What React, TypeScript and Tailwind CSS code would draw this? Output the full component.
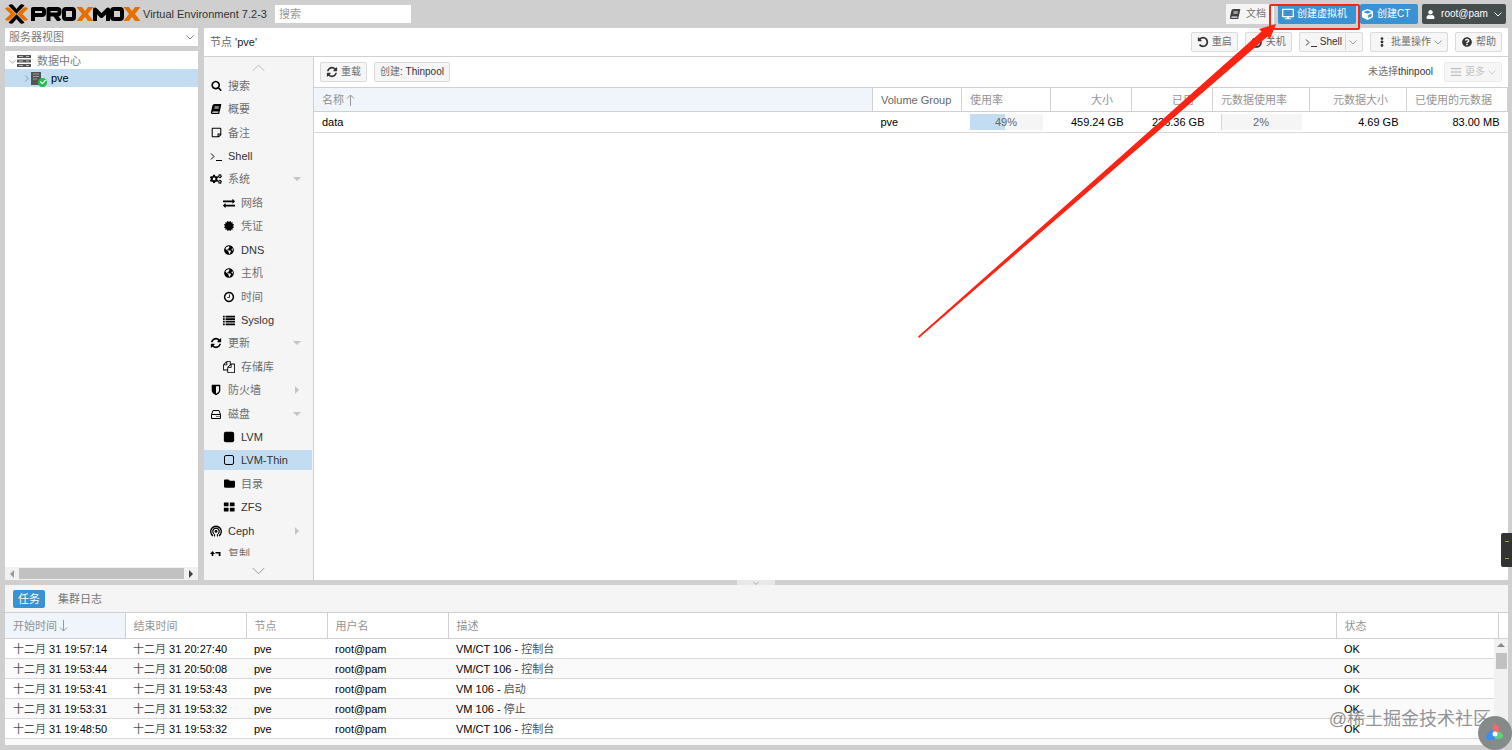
import type { ReactNode } from "react";
import {
  FaBook,
  FaCertificate,
  FaCheck,
  FaCogs,
  FaCube,
  FaDesktop,
  FaEllipsisV,
  FaFolder,
  FaGlobeAmericas,
  FaPowerOff,
  FaQuestionCircle,
  FaRegStickyNote,
  FaUser,
} from "react-icons/fa";

const paths = {
  search:
    "M1216 832q0-185-131.5-316.5t-316.5-131.5-316.5 131.5-131.5 316.5 131.5 316.5 316.5 131.5 316.5-131.5 131.5-316.5zm512 832q0 52-38 90t-90 38q-54 0-90-38l-343-342q-179 124-399 124-143 0-273.5-55.5t-225-150-150-225-55.5-273.5 55.5-273.5 150-225 225-150 273.5-55.5 273.5 55.5 225 150 150 225 55.5 273.5q0 220-124 399l343 343q37 37 37 90z",
  refresh:
    "M1639 1056q0 5-1 7-64 268-268 434.5t-478 166.5q-146 0-282.5-55t-243.5-157l-129 129q-19 19-45 19t-45-19-19-45v-448q0-26 19-45t45-19h448q26 0 45 19t19 45-19 45l-137 137q71 66 161 102t187 36q134 0 250-65t186-179q11-17 53-117 8-23 30-23h192q13 0 22.5 9.5t9.5 22.5zm25-800v448q0 26-19 45t-45 19h-448q-26 0-45-19t-19-45 19-45l138-138q-148-137-349-137-134 0-250 65t-186 179q-11 17-53 117-8 23-30 23h-199q-13 0-22.5-9.5t-9.5-22.5v-7q65-268 270-434.5t480-166.5q146 0 284 55.5t245 156.5l130-129q19-19 45-19t45 19 19 45z",
  undo: "M1664 896q0 156-61 298t-164 245-245 164-298 61q-172 0-327-72.5t-264-204.5q-7-10-6.5-22.5t8.5-20.5l137-138q10-9 25-9 16 2 23 12 73 95 179 147t225 52q104 0 198.5-40.5t163.5-109.5 109.5-163.5 40.5-198.5-40.5-198.5-109.5-163.5-163.5-109.5-198.5-40.5q-98 0-188 35.5t-160 101.5l137 138q31 30 14 69-17 40-59 40h-448q-26 0-45-19t-19-45v-448q0-42 40-59 39-17 69 14l130 129q107-101 244.5-156.5t284.5-55.5q156 0 298 61t245 164 164 245 61 298z",
  clock:
    "M1024 544v448q0 14-9 23t-23 9h-320q-14 0-23-9t-9-23v-64q0-14 9-23t23-9h224v-352q0-14 9-23t23-9h64q14 0 23 9t9 23zm416 352q0-148-73-273t-198-198-273-73-273 73-198 198-73 273 73 273 198 198 273 73 273-73 198-198 73-273zm224 0q0 209-103 385.5t-279.5 279.5-385.5 103-385.5-103-279.5-279.5-103-385.5 103-385.5 279.5-279.5 385.5-103 385.5 103 279.5 279.5 103 385.5z",
  files:
    "M1696 384q40 0 68 28t28 68v1216q0 40-28 68t-68 28h-960q-40 0-68-28t-28-68v-288h-544q-40 0-68-28t-28-68v-672q0-40 20-88t48-76l408-408q28-28 76-48t88-20h416q40 0 68 28t28 68v328q68-40 128-40h416zm-544 213l-299 299h299v-299zm-640-384l-299 299h299v-299zm196 647l316-316v-416h-384v416q0 40-28 68t-68 28h-416v640h512v-256q0-40 20-88t48-76zm956 804v-1152h-384v416q0 40-28 68t-68 28h-416v640h896z",
  exchange:
    "M1792 1184v192q0 13-9.500 22.500t-22.500 9.500h-1376v192q0 13-9.500 22.500t-22.500 9.500q-12 0-24-10l-319-320q-9-9-9-22 0-14 9-23l320-320q9-9 23-9 13 0 22.500 9.500t9.500 22.500v192h1376q13 0 22.500 9.500t9.500 22.500zm0-544q0 14-9 23l-320 320q-9 9-23 9-13 0-22.500-9.500t-9.500-22.500v-192h-1376q-13 0-22.500-9.500t-9.500-22.500v-192q0-13 9.500-22.500t22.500-9.500h1376v-192q0-14 9-23t23-9q12 0 24 10l319 319q9 9 9 23z",
  list: "M0 256h256v256H0zM384 256h1408v256H384zM0 640h256v256H0zM384 640h1408v256H384zM0 1024h256v256H0zM384 1024h1408v256H384zM0 1408h256v256H0zM384 1408h1408v256H384z",
  bars: "M128 320h1536v176H128zM128 808h1536v176H128zM128 1296h1536v176H128z",
  shield:
    "M1344 960v-640h-448v1137q119-63 213-137 235-184 235-360zm192-768v768q0 86-33.500 170.500t-83 150-118 127.500-126.500 103-121 77.500-89.500 49.500-42.500 20q-12 6-26 6t-26-6q-16-7-42.500-20t-89.500-49.500-121-77.500-126.500-103-118-127.500-83-150-33.500-170.500v-768q0-26 19-45t45-19h1152q26 0 45 19t19 45z",
  thLarge:
    "M192 224h576q64 0 64 64v448q0 64-64 64H192q-64 0-64-64V288q0-64 64-64zM1088 224h576q64 0 64 64v448q0 64-64 64h-576q-64 0-64-64V288q0-64 64-64zM192 992h576q64 0 64 64v448q0 64-64 64H192q-64 0-64-64v-448q0-64 64-64zM1088 992h576q64 0 64 64v448q0 64-64 64h-576q-64 0-64-64v-448q0-64 64-64z",
  square:
    "M416 128h960q288 0 288 288v960q0 288-288 288H416q-288 0-288-288V416q0-288 288-288z",
};

function Glyph({ name, size = 12 }: { name: keyof typeof paths; size?: number }) {
  return (
    <svg width={size} height={size} viewBox="0 0 1792 1792" fill="currentColor" aria-hidden="true">
      <path d={paths[name]} />
    </svg>
  );
}

function Prompt() {
  return (
    <svg width="12" height="12" viewBox="0 0 12 12" fill="none" stroke="currentColor" aria-hidden="true">
      <path d="M1 3.500l3 3-3 3M6 10.500h6" />
    </svg>
  );
}

function SquareOutline() {
  return (
    <svg width="12" height="12" viewBox="0 0 12 12" fill="none" stroke="currentColor" aria-hidden="true">
      <rect x="1.500" y="1.500" width="9" height="9" rx="1.500" />
    </svg>
  );
}

function DiskIcon() {
  return (
    <svg width="12" height="12" viewBox="0 0 12 12" fill="none" stroke="currentColor" strokeLinejoin="round" aria-hidden="true">
      <path d="M1.500 6.500h9v4h-9zM1.500 6.500l1.500-4h6l1.500 4M6.500 8.500h1M8.500 8.500h1" />
    </svg>
  );
}

function CephIcon() {
  return (
    <svg width="12" height="12" viewBox="0 0 12 12" fill="none" stroke="currentColor" aria-hidden="true">
      <path d="M3 10.900a5.300 5.300 0 1 1 6 0" strokeWidth="1.300" />
      <path d="M4 8.800a3.200 3.200 0 1 1 4 0" strokeWidth="1.200" />
      <circle cx="6" cy="6.300" r="1" fill="currentColor" />
      <path d="M4.600 11.500V9M7.400 11.500V9" />
    </svg>
  );
}

function ReplicaIcon() {
  return (
    <svg width="12" height="12" viewBox="0 0 12 12" fill="currentColor" aria-hidden="true">
      <path d="M2.500 3l2.500 3H3.300v4h3.200v1.500H1.700V6H0zM5.500 4h5v5H12l-2.500 3L7 9h1.700V5.500H5.500z" />
    </svg>
  );
}

function Chevron({ dir = "down", size = 8 }: { dir?: "down" | "up" | "right"; size?: number }) {
  const d = { down: "M1 5l7 7 7-7", up: "M1 12l7-7 7 7", right: "M5 1l7 7-7 7" }[dir];
  return (
    <svg width={size} height={size} viewBox="0 0 16 16" fill="none" stroke="currentColor" strokeWidth={16 / size} aria-hidden="true">
      <path d={d} />
    </svg>
  );
}

function Triangle({ dir }: { dir: "down" | "up" | "left" | "right" }) {
  const d = { down: "M0 2h8L4 6z", up: "M0 6h8L4 2z", left: "M6 0v8L2 4z", right: "M2 0v8l4-4z" }[dir];
  return (
    <svg width="8" height="8" viewBox="0 0 8 8" fill="currentColor" aria-hidden="true">
      <path d={d} />
    </svg>
  );
}

function SortArrow({ up = false }: { up?: boolean }) {
  return (
    <svg width="9" height="12" viewBox="0 0 9 12" fill="none" stroke="#999" className="ml-0.5 inline-block align-[-2px]" aria-hidden="true">
      <path d={up ? "M4.500 12V1M1 4.500l3.500-3.500L8 4.500" : "M4.500 0v11M1 7.500L4.500 11 8 7.500"} />
    </svg>
  );
}

// Chinese runs are set in a lighter tone than latin ones
function Label({ text }: { text: string }) {
  return (
    <>
      {text.split(/([\u4e00-\u9fff]+)/).map((part, i) =>
        i % 2 ? (
          <span key={i} className="opacity-70">
            {part}
          </span>
        ) : (
          part
        )
      )}
    </>
  );
}

interface ToolButtonProps {
  icon?: ReactNode;
  label: string;
  menu?: boolean;
  split?: boolean;
  disabled?: boolean;
}

function ToolButton({ icon, label, menu, split, disabled }: ToolButtonProps) {
  return (
    <button
      type="button"
      disabled={disabled}
      className="flex h-5 items-center gap-[3px] whitespace-nowrap rounded-xs border border-[#dadada] bg-[#f6f6f6] px-[5px] text-[10px] text-[#333] disabled:border-[#ececec] disabled:text-[#b0b0b0]"
    >
      {icon && <span className="flex w-3 justify-center">{icon}</span>}
      <span>
        <Label text={label} />
      </span>
      {split && <span className="h-4 w-px bg-[#d8d8d8]" />}
      {(menu || split) && (
        <span className={disabled ? "text-[#ccc]" : "text-[#999]"}>
          <Chevron />
        </span>
      )}
    </button>
  );
}

interface NavItem {
  label: string;
  icon: ReactNode;
  child?: boolean;
  arrow?: "down" | "right";
  active?: boolean;
}

const navItems: NavItem[] = [
  { label: "搜索", icon: <Glyph name="search" size={11} /> },
  { label: "概要", icon: <FaBook size={10} className="-skew-x-12" /> },
  { label: "备注", icon: <FaRegStickyNote size={11} /> },
  { label: "Shell", icon: <Prompt /> },
  { label: "系统", icon: <FaCogs size={12} />, arrow: "down" },
  { label: "网络", icon: <Glyph name="exchange" />, child: true },
  { label: "凭证", icon: <FaCertificate size={10} />, child: true },
  { label: "DNS", icon: <FaGlobeAmericas size={10} />, child: true },
  { label: "主机", icon: <FaGlobeAmericas size={10} />, child: true },
  { label: "时间", icon: <Glyph name="clock" />, child: true },
  { label: "Syslog", icon: <Glyph name="list" />, child: true },
  { label: "更新", icon: <Glyph name="refresh" />, arrow: "down" },
  { label: "存储库", icon: <Glyph name="files" />, child: true },
  { label: "防火墙", icon: <Glyph name="shield" />, arrow: "right" },
  { label: "磁盘", icon: <DiskIcon />, arrow: "down" },
  { label: "LVM", icon: <Glyph name="square" />, child: true },
  { label: "LVM-Thin", icon: <SquareOutline />, child: true, active: true },
  { label: "目录", icon: <FaFolder size={11} />, child: true },
  { label: "ZFS", icon: <Glyph name="thLarge" />, child: true },
  { label: "Ceph", icon: <CephIcon />, arrow: "right" },
  { label: "复制", icon: <ReplicaIcon /> },
];

const tasks = [
  ["十二月 31 19:57:14", "十二月 31 20:27:40", "pve", "root@pam", "VM/CT 106 - 控制台", "OK"],
  ["十二月 31 19:53:44", "十二月 31 20:50:08", "pve", "root@pam", "VM/CT 106 - 控制台", "OK"],
  ["十二月 31 19:53:41", "十二月 31 19:53:43", "pve", "root@pam", "VM 106 - 启动", "OK"],
  ["十二月 31 19:53:31", "十二月 31 19:53:32", "pve", "root@pam", "VM 106 - 停止", "OK"],
  ["十二月 31 19:48:50", "十二月 31 19:53:32", "pve", "root@pam", "VM/CT 106 - 控制台", "OK"],
];

function Logo() {
  return (
    <div className="flex items-center gap-[3px]" role="img" aria-label="Proxmox">
      <svg width="23" height="20" viewBox="0 0 23 20" fill="none" aria-hidden="true">
        <path d="M0 4.500q2.500-2.500 5.500 0L11 10l-5.500 5.500q-3 2.500-5.500 0L5.500 10zM23 4.500q-2.500-2.500-5.500 0L12 10l5.500 5.500q3 2.500 5.500 0L17.500 10z" fill="#e57000" />
        <path d="M3.500 1.500q3-2.500 5 0l3 3.500 3-3.500q2-2.500 5 0L11.500 9.700zM3.500 18.500q3 2.500 5 0l3-3.500 3 3.500q2 2.500 5 0l-8-8.200z" fill="#000" />
      </svg>
      <svg width="109" height="14" viewBox="0 0 109 14" fill="none" stroke="#000" strokeWidth="4" strokeLinejoin="round" aria-hidden="true">
        <path d="M2 14V2h9q2 0 2 2v2q0 2-2 2H2M17.500 14V2h9q2 0 2 2v1.500q0 2-2 2h-9M24 8l4.500 6M35 2h6q2 0 2 2v6q0 2-2 2h-6q-2 0-2-2V4q0-2 2-2z" />
        <path d="M64 14V2.500l6.500 6.500L77 2.500V14M83 2h6q2 0 2 2v6q0 2-2 2h-6q-2 0-2-2V4q0-2 2-2z" />
        <path d="M45.500 0h5.500l3 4 3-4h5.500L57 7l5.500 7H57l-3-4-3 4h-5.500L51 7zM92.500 0H98l3 4 3-4h5.500L104 7l5.500 7H104l-3-4-3 4h-5.500L98 7z" fill="#e57000" stroke="none" />
      </svg>
    </div>
  );
}

function Header() {
  return (
    <header className="flex h-7 shrink-0 items-center pl-[5px] pr-1.5 text-[10px]">
      <Logo />
      <h1 className="ml-[3px] whitespace-nowrap text-[11px] text-[#333]">Virtual Environment 7.2-3</h1>
      <input
        type="search"
        aria-label="搜索"
        placeholder="搜索"
        className="ml-2 h-[18px] w-[136px] bg-white px-1 text-[11px] outline-none placeholder:text-[#999]"
      />
      <div className="ml-auto flex items-center gap-1">
        <button type="button" className="flex h-5 w-12 items-center gap-1.5 bg-[#f5f5f5] px-1 text-[#404040]">
          <FaBook size={10} className="-skew-x-12" />
          <Label text="文档" />
        </button>
        <button type="button" className="flex h-5 w-[78px] items-center gap-[3px] rounded-xs bg-[#3892d4] px-1 text-white">
          <FaDesktop size={12} />
          创建虚拟机
        </button>
        <button type="button" className="flex h-5 w-[58px] items-center gap-1 rounded-xs bg-[#3892d4] px-0.5 text-white">
          <FaCube size={11} />
          创建CT
        </button>
        <button type="button" className="flex h-5 w-[84px] items-center justify-center gap-1.5 rounded-xs bg-[#464d4d] text-white">
          <FaUser size={9} />
          root@pam
          <Chevron />
        </button>
      </div>
    </header>
  );
}

function ResourceTree() {
  return (
    <aside className="flex w-[193px] shrink-0 flex-col gap-[5px]">
      <button type="button" className="flex h-[18px] items-center justify-between bg-white px-1 text-[#404040]">
        <Label text="服务器视图" />
        <span className="text-[#888]">
          <Chevron />
        </span>
      </button>
      <div className="flex min-h-0 flex-1 flex-col bg-white">
        <div className="flex h-[18px] items-center pl-1 pt-0.5 text-[#404040]">
          <span className="w-2 text-[#aaa]">
            <Chevron size={7} />
          </span>
          <svg width="14" height="12" viewBox="0 0 14 12" className="mr-1.5" aria-hidden="true">
            <path d="M0 0h14v3H0zM0 4.500h14v3H0zM0 9h14v3H0z" fill="#555" />
            <path d="M9 1.500h3M9 6h3M9 10.500h3M2 1.500h4M2 6h4M2 10.500h4" stroke="#bbb" />
          </svg>
          <Label text="数据中心" />
        </div>
        <div className="flex h-[18px] items-center bg-[#c2ddf2] pl-[18px] text-black">
          <span className="w-2 text-[#999]">
            <Chevron size={7} dir="right" />
          </span>
          <span className="relative mr-1 w-4">
            <svg width="10" height="13" viewBox="0 0 10 13" aria-hidden="true">
              <path d="M0 0h10v13H0z" fill="#555" />
              <path d="M2 2h6M2 4.500h6M2 7h4" stroke="#999" />
            </svg>
            <span className="absolute -bottom-0.5 right-0 flex size-[9px] items-center justify-center rounded-full bg-[#21bf4b] text-white">
              <FaCheck size={6} />
            </span>
          </span>
          pve
        </div>
        <div className="mt-auto flex h-[13px] items-center justify-between bg-[#f1f1f1] px-[3px]">
          <span className="text-[#999]">
            <Triangle dir="left" />
          </span>
          <span className="mx-[3px] h-[11px] flex-1 bg-[#c1c1c1]" />
          <span className="text-[#404040]">
            <Triangle dir="right" />
          </span>
        </div>
      </div>
    </aside>
  );
}

function NodeNav() {
  return (
    <nav className="flex w-[110px] shrink-0 flex-col border-r border-[#d0d0d0] bg-[#f5f5f5]">
      <div className="flex h-[17px] shrink-0 items-center justify-center pt-1 text-[#bbb]">
        <Chevron dir="up" size={13} />
      </div>
      <div className="min-h-0 flex-1 overflow-hidden">
        <ul className="flex h-[492px] flex-col">
          {navItems.map((item) => (
            <li key={item.label} className="flex flex-1 items-center">
              <a
                href="#"
                className={`mr-px flex h-5 flex-1 items-center pr-[11px] text-[#333] ${item.child ? "pl-[19px]" : "pl-1.5"} ${item.active ? "bg-[#c2ddf2]" : ""}`}
              >
                <span className="mr-1.5 flex w-3 justify-center text-black">{item.icon}</span>
                <Label text={item.label} />
                {item.arrow && (
                  <span className="ml-auto text-[#c4c4c4]">
                    <Triangle dir={item.arrow} />
                  </span>
                )}
              </a>
            </li>
          ))}
        </ul>
      </div>
      <div className="flex h-6 shrink-0 items-center justify-center pt-1 text-[#999]">
        <Chevron size={13} />
      </div>
    </nav>
  );
}

function UsageBar({ percent }: { percent: number }) {
  return (
    <div className="relative h-4 bg-[#f5f5f5] text-center leading-4 text-[#666]">
      <div className="absolute inset-y-0 left-0 bg-[#c2ddf2]" style={{ width: `${percent}%` }} />
      <span className="relative">{percent}%</span>
    </div>
  );
}

function ThinpoolTable() {
  const th = "border-r border-[#d0d0d0] px-2 font-normal";
  return (
    <table className="w-full table-fixed border-collapse">
      <colgroup>
        <col />
        <col className="w-[89px]" />
        <col className="w-[89px]" />
        <col className="w-[81px]" />
        <col className="w-[81px]" />
        <col className="w-[97px]" />
        <col className="w-[97px]" />
        <col className="w-[101px]" />
      </colgroup>
      <thead>
        <tr className="h-6 whitespace-nowrap border-y border-[#d0d0d0] text-left text-[#666]">
          <th className={`${th} bg-[#eff5fb]`}>
            <Label text="名称" />
            <SortArrow up />
          </th>
          <th className={th}>Volume Group</th>
          <th className={th}>
            <Label text="使用率" />
          </th>
          <th className={`${th} pr-[18px] text-right`}>
            <Label text="大小" />
          </th>
          <th className={`${th} pr-[18px] text-right`}>
            <Label text="已用" />
          </th>
          <th className={th}>
            <Label text="元数据使用率" />
          </th>
          <th className={`${th} pr-[18px] text-right`}>
            <Label text="元数据大小" />
          </th>
          <th className={`${th} pr-[18px] text-right`}>
            <Label text="已使用的元数据" />
          </th>
        </tr>
      </thead>
      <tbody>
        <tr className="h-[21px] border-b border-[#d8d8d8] text-black">
          <td className="px-2">data</td>
          <td className="px-2">pve</td>
          <td className="px-2">
            <UsageBar percent={49} />
          </td>
          <td className="px-2 text-right">459.24 GB</td>
          <td className="px-2 text-right">226.36 GB</td>
          <td className="px-2">
            <UsageBar percent={2} />
          </td>
          <td className="px-2 text-right">4.69 GB</td>
          <td className="px-2 text-right">83.00 MB</td>
        </tr>
      </tbody>
    </table>
  );
}

function NodePanel() {
  return (
    <main className="flex min-w-0 flex-1 flex-col bg-white">
      <div className="flex h-[29px] shrink-0 items-center gap-[7px] border-b border-[#d0d0d0] pl-1.5 pr-1.5">
        <h2 className="mr-auto text-[#222]">
          <Label text="节点 'pve'" />
        </h2>
        <ToolButton icon={<Glyph name="undo" />} label="重启" />
        <ToolButton icon={<FaPowerOff size={11} />} label="关机" />
        <ToolButton icon={<Prompt />} label="Shell" split />
        <ToolButton icon={<FaEllipsisV size={10} />} label="批量操作" menu />
        <ToolButton icon={<FaQuestionCircle size={10} />} label="帮助" />
      </div>
      <div className="flex min-h-0 flex-1">
        <NodeNav />
        <section className="min-w-0 flex-1">
          <div className="flex h-[30px] items-center gap-[7px] px-1.5">
            <ToolButton icon={<Glyph name="refresh" />} label="重载" />
            <ToolButton label="创建: Thinpool" />
            <span className="ml-auto mr-1 text-[10px] text-[#333]">
              <Label text="未选择thinpool" />
            </span>
            <ToolButton icon={<Glyph name="bars" />} label="更多" menu disabled />
          </div>
          <ThinpoolTable />
        </section>
      </div>
    </main>
  );
}

function TaskLog() {
  const headers = ["开始时间", "结束时间", "节点", "用户名", "描述", "状态"];
  return (
    <section className="relative ml-[5px] mr-1 flex h-40 shrink-0 flex-col overflow-hidden bg-white">
      <div className="flex h-[27px] shrink-0 items-center gap-[7px] bg-[#f5f5f5] px-2">
        <button type="button" className="h-[18px] rounded-xs bg-[#3892d4] px-[5px] text-white">
          任务
        </button>
        <button type="button" className="h-[18px] px-1.5 text-[#404040]">
          <Label text="集群日志" />
        </button>
      </div>
      <table className="w-full table-fixed border-collapse">
        <colgroup>
          <col className="w-[120px]" />
          <col className="w-[121px]" />
          <col className="w-[81px]" />
          <col className="w-[121px]" />
          <col />
          <col className="w-[162px]" />
          <col className="w-[10px]" />
        </colgroup>
        <thead>
          <tr className="h-[26px] border-y border-[#d0d0d0] text-left text-[#666]">
            {headers.map((header, i) => (
              <th key={header} className={`border-r border-[#d0d0d0] px-2 font-normal ${i === 0 ? "bg-[#eff5fb]" : ""}`}>
                <Label text={header} />
                {i === 0 && <SortArrow />}
              </th>
            ))}
            <td />
          </tr>
        </thead>
        <tbody>
          {tasks.map((task) => (
            <tr key={task[0]} className="h-5 border-b border-[#d8d8d8] text-black even:bg-[#fafafa]">
              {task.map((cell, i) => (
                <td key={i} className="truncate px-2">
                  <Label text={cell} />
                </td>
              ))}
              <td />
            </tr>
          ))}
        </tbody>
      </table>
      <div className="flex-1 bg-[#fafafa]" />
      <div className="absolute bottom-0 right-0 top-[54px] flex w-[14px] flex-col items-center gap-1 bg-[#f1f1f1] pt-0.5 text-[#888]">
        <Triangle dir="up" />
        <span className="h-4 w-[11px] bg-[#c1c1c1]" />
      </div>
    </section>
  );
}

function Annotation() {
  return (
    <svg width="460" height="340" viewBox="0 0 460 340" className="pointer-events-none absolute right-[134px] top-0" aria-hidden="true">
      <path d="M0 336.500L343.500 31.500 341 29l17-5-6 15-2.500-2.500L1 338z" fill="#fa2414" />
      <rect x="352" y="5" width="89" height="24" rx="1" fill="none" stroke="#fa2414" strokeWidth="2" />
    </svg>
  );
}

function FloatingWidgets() {
  return (
    <>
      <div className="absolute right-0 top-[533px] flex h-[34px] w-[11px] flex-col items-center justify-around rounded-l-xs bg-[#333]">
        <span className="h-px w-1 bg-[#a0a030]" />
        <span className="h-px w-1 bg-[#a0a030]" />
      </div>
      <p className="absolute bottom-[23px] right-[21px] whitespace-nowrap text-[18px] text-[#777]/80">@稀土掘金技术社区</p>
      <svg width="34" height="34" viewBox="0 0 34 34" className="absolute bottom-0 right-0" aria-hidden="true">
        <circle cx="17" cy="17" r="17" fill="#858b8b" />
        <path d="M17 8q5 0 4 8l-6 1q-2-8 2-9z" fill="#f06a6a" />
        <path d="M15 13l2 10q-7 3-9-1 0-5 7-9z" fill="#3b8df0" />
        <path d="M19 15q7 2 6 6-2 3-8 2z" fill="#5fcf7a" />
        <circle cx="17" cy="18" r="2.500" fill="#fff" />
      </svg>
    </>
  );
}

export default function App() {
  return (
    <div className="relative flex h-screen flex-col overflow-hidden bg-[#cfcfcf] pb-[5px] font-['Liberation_Sans','Noto_Sans_CJK_SC',sans-serif] text-[11px] leading-4">
      <Header />
      <div className="flex min-h-0 flex-1 gap-1.5 pl-[5px] pr-1">
        <ResourceTree />
        <NodePanel />
      </div>
      <div className="flex h-[5px] shrink-0 justify-center">
        <span className="flex w-[38px] items-center justify-center bg-[#e8e8e8] text-[#aaa]">
          <Chevron size={6} />
        </span>
      </div>
      <TaskLog />
      <Annotation />
      <FloatingWidgets />
    </div>
  );
}
